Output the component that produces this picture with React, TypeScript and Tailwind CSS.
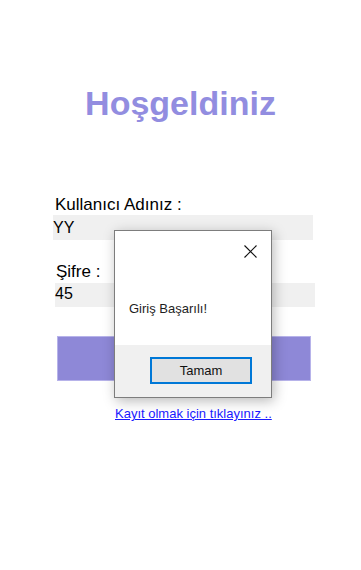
import React from 'react';

const font = { fontFamily: '"Liberation Sans", Arial, sans-serif' };

const App: React.FC = () => {
  return (
    <div className="relative w-[361px] h-[570px] bg-white text-black overflow-hidden font-['Liberation_Sans',Arial,sans-serif]">
      {/* Title */}
      <h1 className="pt-[86px] text-center text-[34px] leading-none font-bold text-[#928de0]">
        Hoşgeldiniz
      </h1>

      {/* Login form */}
      <div className="flex flex-col">
        <label className="mt-[76px] ml-[55px] text-[17px] leading-none">Kullanıcı Adınız :</label>
        <div className="mt-[2px] ml-[53px] w-[260px] h-[25px] bg-[#f0f0f0] pt-[5px] text-[16px] leading-none">
          YY
        </div>

        <label className="mt-[23px] ml-[56px] text-[17px] leading-none">Şifre :</label>
        <div className="mt-[3px] ml-[55px] w-[260px] h-[24px] bg-[#f0f0f0] pt-[3px] text-[16px] leading-none">
          45
        </div>

        <button className="mt-[29px] ml-[57px] w-[254px] h-[45px] bg-[#8e88d7] border border-[#b7b3ea]"></button>

        <a className="mt-[26px] ml-[115px] text-[13px] leading-none text-[#1a1aff] underline">
          Kayıt olmak için tıklayınız ..
        </a>
      </div>

      {/* Message box */}
      <div
        className="absolute left-[114px] top-[230px] w-[158px] h-[168px] border border-[#7d7d7d] bg-white flex flex-col shadow-[2px_3px_12px_rgba(0,0,0,0.28)]"
        style={font}
      >
        <div className="relative flex-1">
          <svg
            className="absolute left-[129px] top-[14px]"
            width="13"
            height="13"
            viewBox="0 0 13 13"
          >
            <path d="M0.5 0.5 L12.5 12.5 M12.5 0.5 L0.5 12.5" stroke="#111" strokeWidth="1.1" />
          </svg>
          <p className="absolute left-[14px] top-[71px] text-[13px] leading-none text-[#1e1e1e]">
            Giriş Başarılı!
          </p>
        </div>
        <div className="h-[52px] bg-[#f0f0f0] pt-[12px] pl-[35px]">
          <button className="w-[102px] h-[27px] bg-[#e1e1e1] border-2 border-[#0078d7] text-[13px] leading-none text-[#111]">
            Tamam
          </button>
        </div>
      </div>
    </div>
  );
};

export default App;
